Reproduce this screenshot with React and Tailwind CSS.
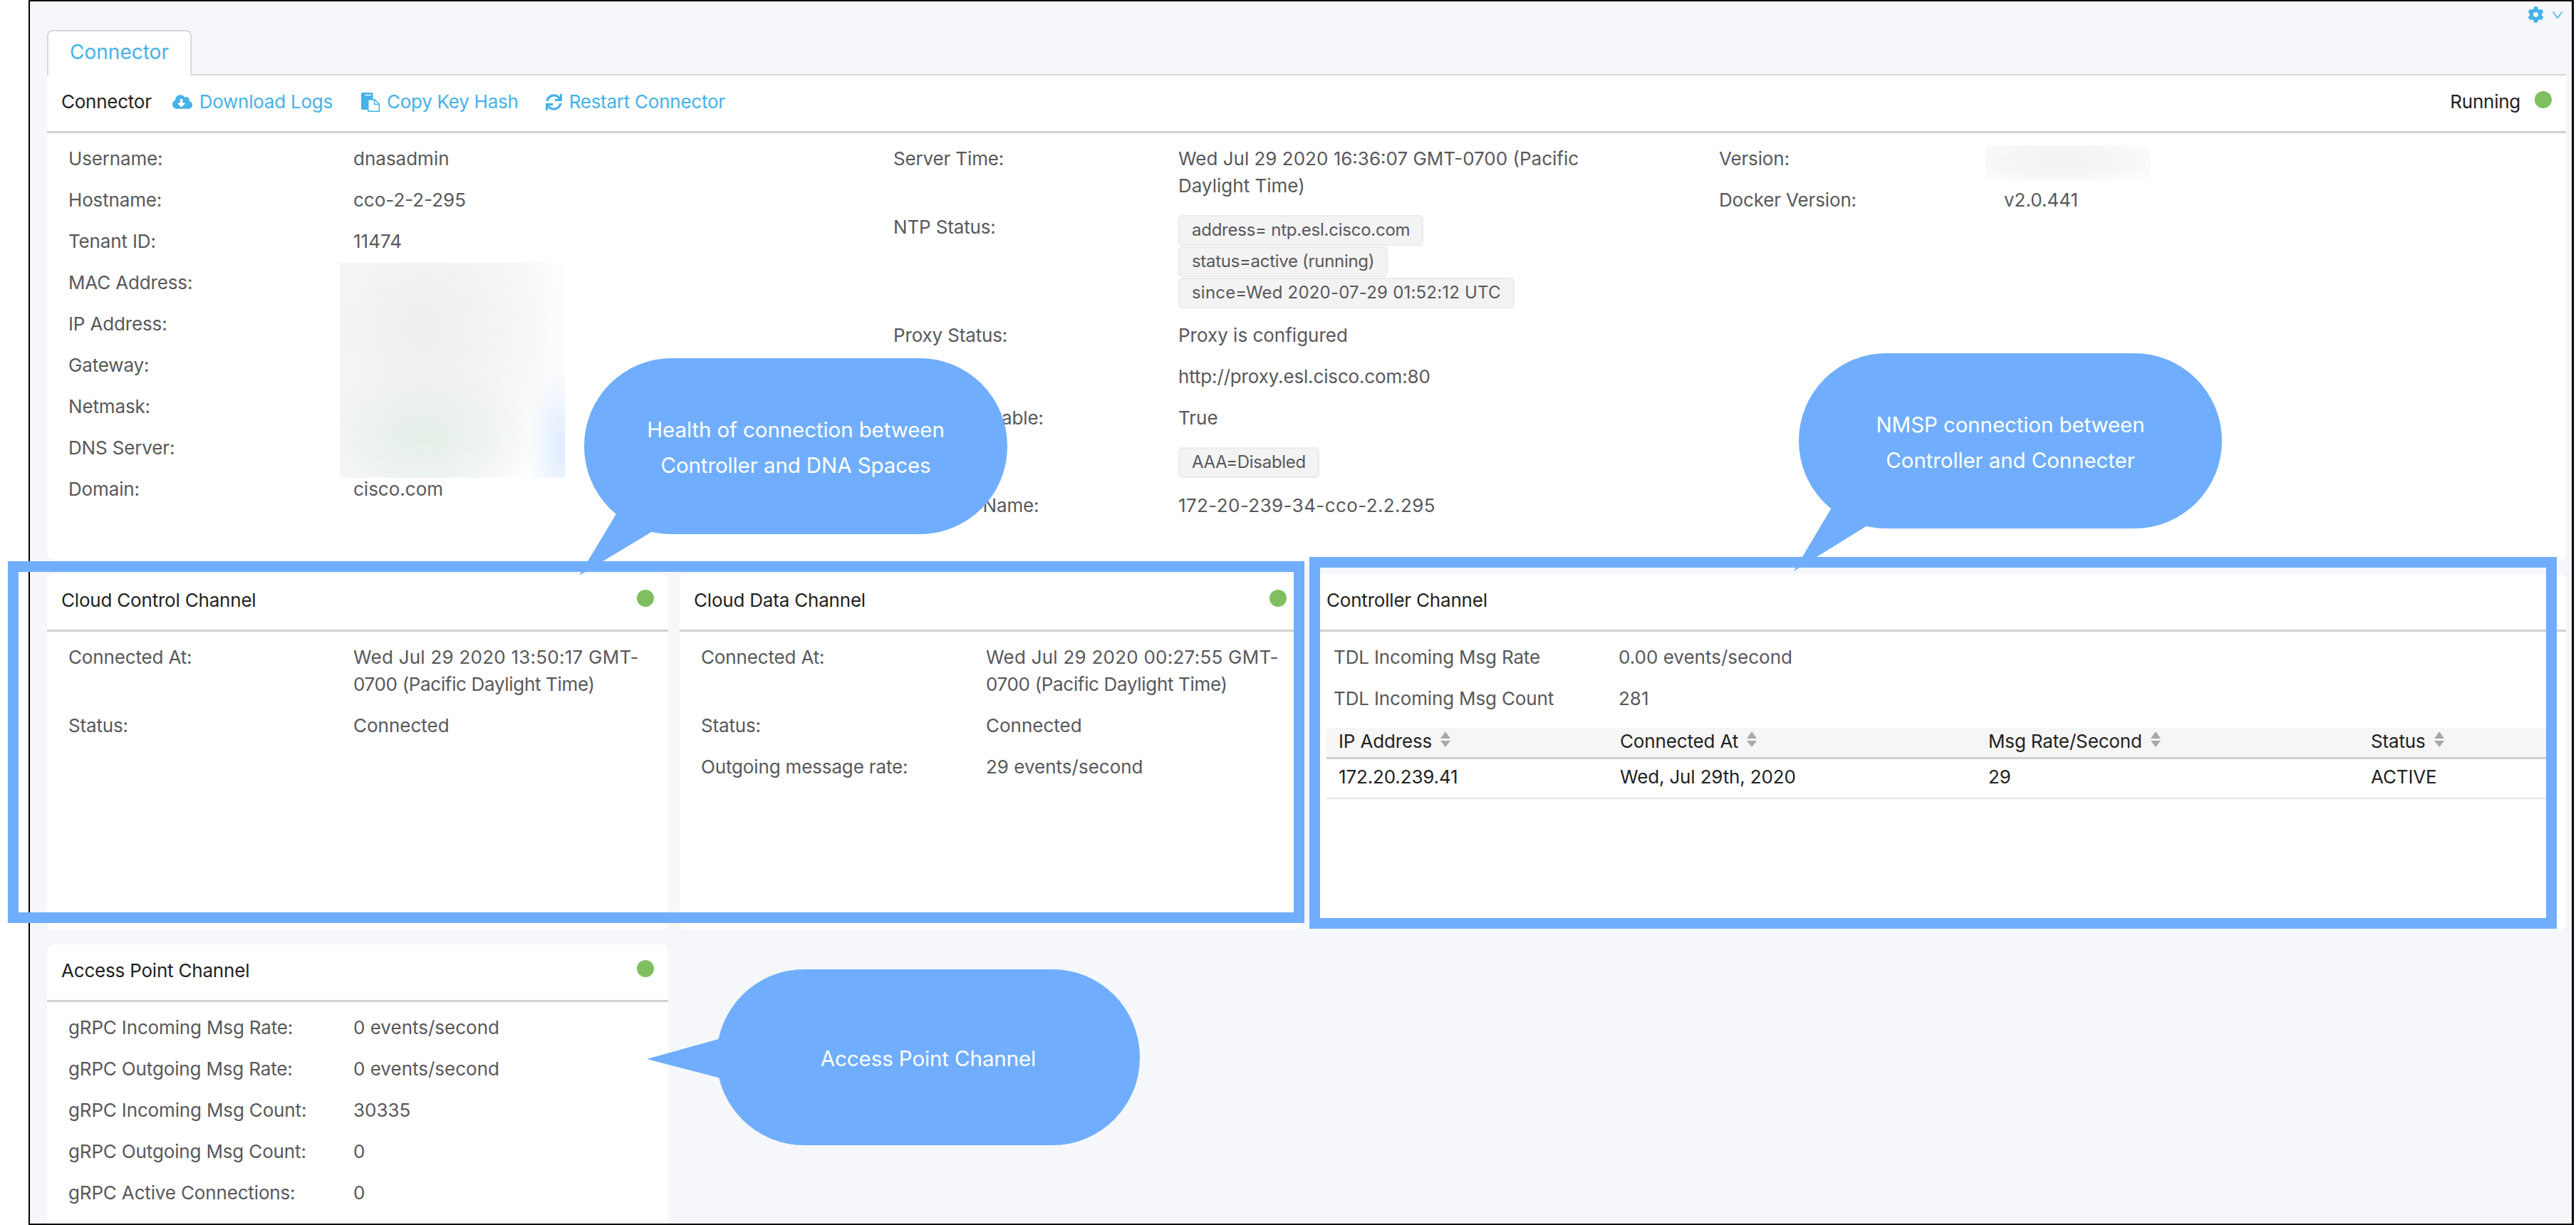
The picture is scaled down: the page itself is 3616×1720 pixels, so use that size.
import React from "react";
import { FaCloudDownloadAlt, FaSync, FaCog } from "react-icons/fa";

const Row = ({ label, children, labelW = "w-[400px]" }) => (
  <div className="flex py-[10px] leading-[38px]">
    <div className={`${labelW} shrink-0 text-[#58585b] tracking-[-0.15px]`}>{label}</div>
    <div className="text-[#58585b]">{children}</div>
  </div>
);

const Tag = ({ children, className = "" }) => (
  <div className={`w-fit h-[43px] leading-[38px] px-[17px] mb-[1px] rounded-[6px] border-2 border-[#ebebeb] bg-[#f3f3f3] text-[24px] text-[#58585b] ${className}`}>
    {children}
  </div>
);

const Dot = () => <div className="w-[24px] h-[24px] mt-[4px] rounded-full bg-[#7fbf5f] shrink-0" />;

const Card = ({ title, dot, className = "", children }) => (
  <div className={`bg-white rounded-[10px] overflow-hidden h-[500px] ${className}`}>
    <div className="h-[81px] px-[20px] pt-[18px] flex justify-between items-start border-b-[3px] border-[#d2d2d2] leading-[38px] text-[#222] tracking-[-0.2px]">
      <span>{title}</span>
      {dot && <Dot />}
    </div>
    <div className="pt-[7px] px-[30px]">{children}</div>
  </div>
);

const Sort = () => (
  <svg width="14" height="22" viewBox="0 0 14 22" className="ml-[12px] mt-[5px] shrink-0">
    <path d="M7 0L14 10H0z" fill="#a8a8a8" />
    <path d="M7 22L0 13h14z" fill="#a8a8a8" />
  </svg>
);

const CopyIcon = () => (
  <svg width="26" height="27" viewBox="0 0 26 27" className="mr-[10px] shrink-0">
    <path d="M1.5 0H15a1.5 1.5 0 0 1 1.5 1.5V24H1.5A1.5 1.5 0 0 1 0 22.5V1.5A1.5 1.5 0 0 1 1.5 0z" fill="#45b2e8" />
    <rect x="5" y="2.8" width="9" height="1.4" fill="#ffffff" />
    <path d="M9.75 9.75H19L25.25 16V26.25H9.75z" fill="#ffffff" stroke="#45b2e8" strokeWidth="1.5" />
    <path d="M18.5 10V16.5H25" fill="none" stroke="#45b2e8" strokeWidth="1.5" />
  </svg>
);

const Highlight = ({ className }) => (
  <div className={`absolute border-[15px] border-[#70aefd] ${className}`} />
);

const Bubble = ({ className, children }) => (
  <div className={`absolute rounded-[123px] bg-[#70aefd] text-white leading-[50px] text-center flex flex-col items-center justify-center pt-[3px] text-[29.5px] tracking-[-0.1px] ${className}`}>
    {children}
  </div>
);

export default function App() {
  return (
    <div className="relative w-[3616px] h-[1720px] overflow-hidden bg-white text-[26px] [font-family:Inter,'Liberation_Sans',sans-serif]">
      <div className="ml-[40px] w-[3573px] h-[1720px] border-2 border-black border-r-[3px] overflow-hidden bg-[#f5f7fb] pl-[24px] pr-[8px]">
        <div className="h-[40px] pt-[7px] pr-[5px] flex justify-end items-start text-[#45b2e8]">
          <FaCog className="w-[23px] h-[23px]" />
          <svg width="14" height="10" viewBox="0 0 14 10" className="ml-[12px] mt-[7px]" fill="none" stroke="#45b2e8" strokeWidth="1.5">
            <path d="M0.5 0.5L7 9.5L13.5 0.5" />
          </svg>
        </div>

        <div className="flex border-b-2 border-[#d9d9d9] h-[64px]">
          <div className="w-[203px] h-[64px] bg-white border-2 border-b-0 border-[#d9d9d9] rounded-t-[8px] text-center leading-[58px] text-[28px] text-[#45b2e8]">
            Connector
          </div>
        </div>

        <div className="bg-white rounded-b-[10px] h-[680px]">
          <div className="h-[81px] pl-[20px] pr-[20px] pt-[18px] flex items-start border-b-[3px] border-[#d2d2d2] leading-[38px] tracking-[-0.25px]">
            <span className="text-[#222] mr-[29px]">Connector</span>
            <a className="flex items-center text-[#45b2e8] mr-[40px]">
              <FaCloudDownloadAlt className="w-[28px] h-[28px] mr-[10px]" />
              Download Logs
            </a>
            <a className="flex items-center text-[#45b2e8] mr-[38px]">
              <CopyIcon />
              Copy Key Hash
            </a>
            <a className="flex items-center text-[#45b2e8]">
              <FaSync className="w-[23px] h-[23px] mr-[10px]" />
              Restart Connector
            </a>
            <span className="ml-auto text-[#222] mr-[20px]">Running</span>
            <Dot />
          </div>

          <div className="flex pt-[7px]">
            <div className="w-[1158px] pl-[30px] relative">
              <Row label="Username:">dnasadmin</Row>
              <Row label="Hostname:">cco-2-2-295</Row>
              <Row label="Tenant ID:">11474</Row>
              <Row label="MAC Address:"> </Row>
              <Row label="IP Address:"> </Row>
              <Row label="Gateway:"> </Row>
              <Row label="Netmask:"> </Row>
              <Row label="DNS Server:"> </Row>
              <Row label="Domain:">cisco.com</Row>
              <div className="absolute left-[411px] top-[175px] w-[316px] h-[302px] bg-[radial-gradient(ellipse_55px_110px_at_100%_85%,#dcebfe_0%,rgba(220,235,254,0)_100%),radial-gradient(ellipse_160px_110px_at_37%_82%,#e5efe8_0%,rgba(229,239,232,0)_100%),radial-gradient(ellipse_220px_260px_at_37%_30%,#eeeeee_0%,#f4f4f4_50%,rgba(255,255,255,0)_100%),linear-gradient(to_right,#f9f9f9,#ffffff)]" />
            </div>
            <div className="w-[1159px] pl-[30px]">
              <Row label="Server Time:">
                Wed Jul 29 2020 16:36:07 GMT-0700 (Pacific<br />Daylight Time)
              </Row>
              <Row label="NTP Status:">
                <div className="mt-[2px] -mb-[2px]">
                  <Tag className="tracking-[-0.25px]">address= ntp.esl.cisco.com</Tag>
                  <Tag className="tracking-[-0.3px]">status=active (running)</Tag>
                  <Tag className="tracking-[0.2px]">since=Wed 2020-07-29 01:52:12 UTC</Tag>
                </div>
              </Row>
              <Row label="Proxy Status:">Proxy is configured</Row>
              <Row label="URL:"><span className="tracking-[-0.15px]">http://proxy.esl.cisco.com:80</span></Row>
              <Row label="Proxy Reachable:">True</Row>
              <Row label="AAA Status:">
                <div className="mt-[2px] -mb-[1px]">
                  <Tag className="tracking-[-0.3px]">AAA=Disabled</Tag>
                </div>
              </Row>
              <Row label="Container Name:"><span className="tracking-[0.4px]">172-20-239-34-cco-2.2.295</span></Row>
            </div>
            <div className="flex-1 pl-[30px]">
              <Row label="Version:" labelW="w-[374px]">
                <div className="h-[38px]" />
              </Row>
              <Row label="Docker Version:">v2.0.441</Row>
            </div>
          </div>
        </div>

        <div className="grid grid-cols-4 gap-x-[16px] gap-y-[20px] mt-[20px]">
          <Card title="Cloud Control Channel" dot>
            <Row label="Connected At:">
              <span className="tracking-[0.24px]">Wed Jul 29 2020 13:50:17 GMT-</span>
              <br />
              <span className="tracking-[-0.33px]">0700 (Pacific Daylight Time)</span>
            </Row>
            <Row label="Status:">Connected</Row>
          </Card>
          <Card title="Cloud Data Channel" dot>
            <Row label="Connected At:">
              <span className="tracking-[0.24px]">Wed Jul 29 2020 00:27:55 GMT-</span>
              <br />
              <span className="tracking-[-0.33px]">0700 (Pacific Daylight Time)</span>
            </Row>
            <Row label="Status:">Connected</Row>
            <Row label="Outgoing message rate:">29 events/second</Row>
          </Card>
          <Card title="Controller Channel" className="col-span-2">
            <Row label="TDL Incoming Msg Rate">0.00 events/second</Row>
            <Row label="TDL Incoming Msg Count">281</Row>
            <div className="-mx-[10px] mt-[12px] text-[#222] tracking-[-0.15px]">
              <div className="grid grid-cols-[395px_517px_537px_1fr] h-[44px] bg-[#f6f6f6] border-b-[3px] border-[#cfcfcf] leading-[38px] rounded-t-[4px]">
                <div className="pl-[17px] flex items-start">IP Address<Sort /></div>
                <div className="pl-[17px] flex items-start">Connected At<Sort /></div>
                <div className="pl-[17px] flex items-start">Msg Rate/Second<Sort /></div>
                <div className="pl-[17px] flex items-start">Status<Sort /></div>
              </div>
              <div className="grid grid-cols-[395px_517px_537px_1fr] h-[56px] pt-[6px] border-b-[2px] border-[#e6e6e6] leading-[38px]">
                <div className="pl-[17px]">172.20.239.41</div>
                <div className="pl-[17px]">Wed, Jul 29th, 2020</div>
                <div className="pl-[17px]">29</div>
                <div className="pl-[17px]">ACTIVE</div>
              </div>
            </div>
          </Card>
          <Card title="Access Point Channel" dot>
            <Row label="gRPC Incoming Msg Rate:">0 events/second</Row>
            <Row label="gRPC Outgoing Msg Rate:">0 events/second</Row>
            <Row label="gRPC Incoming Msg Count:">30335</Row>
            <Row label="gRPC Outgoing Msg Count:">0</Row>
            <Row label="gRPC Active Connections:">0</Row>
          </Card>
        </div>
      </div>

      <div className="absolute left-[2787px] top-[204px] w-[232px] h-[50px] bg-[radial-gradient(ellipse_at_45%_45%,#f2f2f2_0%,#f6f6f6_50%,#ffffff_100%)]" />

      <Highlight className="left-[11px] top-[788px] w-[1820px] h-[508px]" />
      <Highlight className="left-[1838px] top-[782px] w-[1751px] h-[522px]" />

      <svg className="absolute left-0 top-0 pointer-events-none" width="3616" height="1720" fill="#70aefd">
        <path d="M866 720L813 808L916 746Z" />
        <path d="M2571 713L2518 802L2621 738Z" />
        <path d="M1012 1458L908 1487L1012 1514Z" />
      </svg>

      <Bubble className="left-[820px] top-[503px] w-[594px] h-[247px]">
        <div>Health of connection between</div>
        <div>Controller and DNA Spaces</div>
      </Bubble>
      <Bubble className="left-[2525px] top-[496px] w-[594px] h-[246px]">
        <div>NMSP connection between</div>
        <div>Controller and Connecter</div>
      </Bubble>
      <Bubble className="left-[1006px] top-[1361px] w-[594px] h-[247px]">
        <div>Access Point Channel</div>
      </Bubble>
    </div>
  );
}
